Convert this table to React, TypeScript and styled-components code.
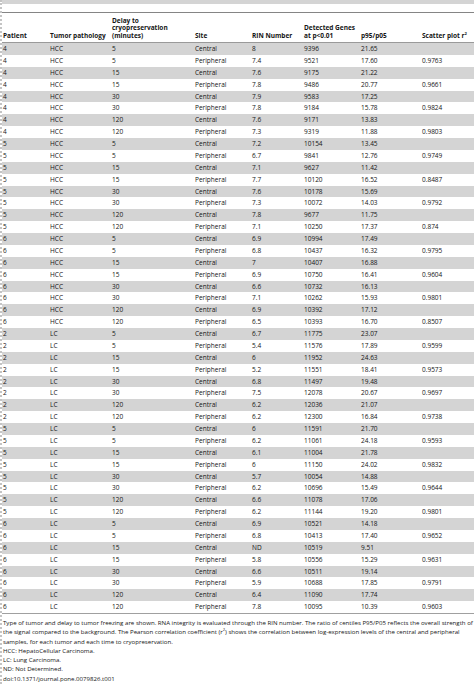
import React from "react";
import styled, { createGlobalStyle } from "styled-components";

type Row = [string, string, string, string, string, string, string, string];

const rows: Row[] = [
  ["4", "HCC", "5", "Central", "8", "9396", "21.65", ""],
  ["4", "HCC", "5", "Peripheral", "7.4", "9521", "17.60", "0.9763"],
  ["4", "HCC", "15", "Central", "7.6", "9175", "21.22", ""],
  ["4", "HCC", "15", "Peripheral", "7.8", "9486", "20.77", "0.9661"],
  ["4", "HCC", "30", "Central", "7.9", "9583", "17.25", ""],
  ["4", "HCC", "30", "Peripheral", "7.8", "9184", "15.78", "0.9824"],
  ["4", "HCC", "120", "Central", "7.6", "9171", "13.83", ""],
  ["4", "HCC", "120", "Peripheral", "7.3", "9319", "11.88", "0.9803"],
  ["5", "HCC", "5", "Central", "7.2", "10154", "13.45", ""],
  ["5", "HCC", "5", "Peripheral", "6.7", "9841", "12.76", "0.9749"],
  ["5", "HCC", "15", "Central", "7.1", "9627", "11.42", ""],
  ["5", "HCC", "15", "Peripheral", "7.7", "10120", "16.52", "0.8487"],
  ["5", "HCC", "30", "Central", "7.6", "10178", "15.69", ""],
  ["5", "HCC", "30", "Peripheral", "7.3", "10072", "14.03", "0.9792"],
  ["5", "HCC", "120", "Central", "7.8", "9677", "11.75", ""],
  ["5", "HCC", "120", "Peripheral", "7.1", "10250", "17.37", "0.874"],
  ["6", "HCC", "5", "Central", "6.9", "10994", "17.49", ""],
  ["6", "HCC", "5", "Peripheral", "6.8", "10437", "16.32", "0.9795"],
  ["6", "HCC", "15", "Central", "7", "10407", "16.88", ""],
  ["6", "HCC", "15", "Peripheral", "6.9", "10750", "16.41", "0.9604"],
  ["6", "HCC", "30", "Central", "6.6", "10732", "16.13", ""],
  ["6", "HCC", "30", "Peripheral", "7.1", "10262", "15.93", "0.9801"],
  ["6", "HCC", "120", "Central", "6.9", "10392", "17.12", ""],
  ["6", "HCC", "120", "Peripheral", "6.5", "10393", "16.70", "0.8507"],
  ["2", "LC", "5", "Central", "6.7", "11775", "23.07", ""],
  ["2", "LC", "5", "Peripheral", "5.4", "11576", "17.89", "0.9599"],
  ["2", "LC", "15", "Central", "6", "11952", "24.63", ""],
  ["2", "LC", "15", "Peripheral", "5.2", "11551", "18.41", "0.9573"],
  ["2", "LC", "30", "Central", "6.8", "11497", "19.48", ""],
  ["2", "LC", "30", "Peripheral", "7.5", "12078", "20.67", "0.9697"],
  ["2", "LC", "120", "Central", "6.2", "12036", "21.07", ""],
  ["2", "LC", "120", "Peripheral", "6.2", "12300", "16.84", "0.9738"],
  ["5", "LC", "5", "Central", "6", "11591", "21.70", ""],
  ["5", "LC", "5", "Peripheral", "6.2", "11061", "24.18", "0.9593"],
  ["5", "LC", "15", "Central", "6.1", "11004", "21.78", ""],
  ["5", "LC", "15", "Peripheral", "6", "11150", "24.02", "0.9832"],
  ["5", "LC", "30", "Central", "5.7", "10054", "14.88", ""],
  ["5", "LC", "30", "Peripheral", "6.2", "10696", "15.49", "0.9644"],
  ["5", "LC", "120", "Central", "6.6", "11078", "17.06", ""],
  ["5", "LC", "120", "Peripheral", "6.2", "11144", "19.20", "0.9801"],
  ["6", "LC", "5", "Central", "6.9", "10521", "14.18", ""],
  ["6", "LC", "5", "Peripheral", "6.8", "10413", "17.40", "0.9652"],
  ["6", "LC", "15", "Central", "ND", "10519", "9.51", ""],
  ["6", "LC", "15", "Peripheral", "5.8", "10556", "15.29", "0.9631"],
  ["6", "LC", "30", "Central", "6.6", "10511", "19.14", ""],
  ["6", "LC", "30", "Peripheral", "5.9", "10688", "17.85", "0.9791"],
  ["6", "LC", "120", "Central", "6.4", "11090", "17.74", ""],
  ["6", "LC", "120", "Peripheral", "7.8", "10095", "10.39", "0.9603"],
];

const colWidths = [47, 62, 83, 57, 52, 57, 61, 70];

const App: React.FC = () => {
  return (
    <>
      <GlobalStyle />
      <Page>
        <TopBand />
        <Table>
          <colgroup>
            {colWidths.map((w, i) => (
              <col key={i} style={{ width: w }} />
            ))}
          </colgroup>
          <thead>
            <tr>
              <Th>Patient</Th>
              <Th>Tumor pathology</Th>
              <Th>
                Delay to
                <br />
                cryopreservation
                <br />
                (minutes)
              </Th>
              <Th>Site</Th>
              <Th>RIN Number</Th>
              <Th>
                Detected Genes
                <br />
                at p&lt;0.01
              </Th>
              <Th>p95/p05</Th>
              <Th>
                Scatter plot r<sup>2</sup>
              </Th>
            </tr>
          </thead>
          <tbody>
            {rows.map((r, i) => (
              <Tr key={i} $shaded={i % 2 === 0}>
                {r.map((c, j) => (
                  <Td key={j}>{c}</Td>
                ))}
              </Tr>
            ))}
          </tbody>
        </Table>
        <Caption>
          <p>
            Type of tumor and delay to tumor freezing are shown. RNA integrity is evaluated through the RIN number. The
            ratio of centiles P95/P05 reflects the overall strength of
            <br />
            the signal compared to the background. The Pearson correlation coefficient (r<sup>2</sup>) shows the
            correlation between log-expression levels of the central and peripheral
            <br />
            samples, for each tumor and each time to cryopreservation.
          </p>
          <p>HCC: HepatoCellular Carcinoma.</p>
          <p>LC: Lung Carcinoma.</p>
          <p>ND: Not Determined.</p>
          <p>doi:10.1371/journal.pone.0079826.t001</p>
        </Caption>
      </Page>
    </>
  );
};

export default App;

// Styled Components
const GlobalStyle = createGlobalStyle`
  html, body {
    margin: 0;
    padding: 0;
    background: #fff;
    overflow: hidden;
  }

  body {
    font-family: "Open Sans", "Liberation Sans", sans-serif;
    color: #151515;
  }
`;

const Page = styled.div`
  width: 490px;
  height: 684px;
  border-left: 2px dotted #c4c4c4;
`;

const TopBand = styled.div`
  height: 4px;
  background: #d4d4d4;
  margin-bottom: 8px;
`;

const Table = styled.table`
  border-collapse: collapse;
  table-layout: fixed;
  width: 489px;
  font-size: 6.5px;
  border-top: 1px solid #858585;
  border-bottom: 1px solid #a0a0a0;
`;

const Th = styled.th`
  text-align: left;
  vertical-align: bottom;
  font-weight: 700;
  line-height: 7.8px;
  padding: 0 0 2px 1px;
  height: 27px;
  border-bottom: 1px solid #9a9a9a;
  white-space: nowrap;

  sup {
    font-size: 4.2px;
    line-height: 0;
    vertical-align: 3px;
  }
`;

const Tr = styled.tr<{ $shaded: boolean }>`
  height: 11.87px;
  background: ${(p) => (p.$shaded ? "#d4d4d4" : "#fff")};
`;

const Td = styled.td`
  padding: 0 0 0 1px;
  line-height: 11.87px;
  white-space: nowrap;
  overflow: hidden;
`;

const Caption = styled.div`
  padding: 4px 0 0 1px;
  font-size: 6.1px;
  line-height: 9.3px;
  white-space: nowrap;

  p {
    margin: 0;
  }

  sup {
    font-size: 4px;
    line-height: 0;
    vertical-align: 3px;
  }
`;
